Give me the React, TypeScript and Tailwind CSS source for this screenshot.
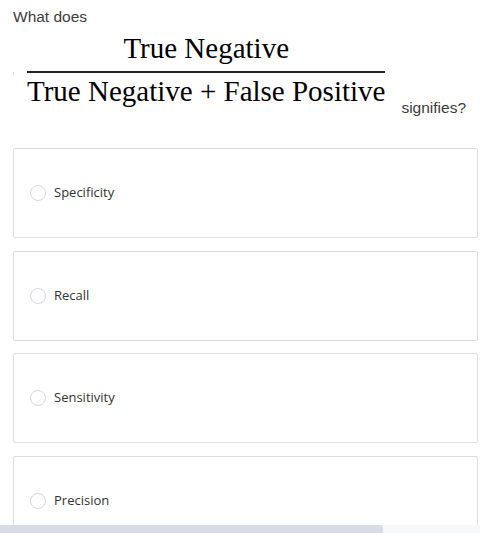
import React from 'react'

const options = ['Specificity', 'Recall', 'Sensitivity', 'Precision']

export default function App() {
  return (
    <div className="relative h-[533px] w-[480px] overflow-hidden bg-white">
      <div className="pl-[13px] pr-[2px] pt-[8px]">
        <div className="text-[15.5px] leading-[18px] text-[#3c3c3c]" style={{ fontFamily: '"Liberation Sans", Arial, sans-serif' }}>
          What does
        </div>

        <div className="flex items-end">
          <span className="mb-[32px] h-[3px] w-px bg-[#dddddd]" />
          <div className="ml-[13px] flex flex-col items-center text-black" style={{ fontFamily: '"Liberation Serif", "Times New Roman", serif' }}>
            <div className="pt-[6px] text-[29px] leading-[32px]">True Negative</div>
            <div className="mt-[7px] h-[2px] w-full bg-[#222]" />
            <div className="mt-[2px] text-[29px] leading-[32px]">True Negative + False Positive</div>
          </div>
          <div className="mb-[-10px] ml-[16px] text-[15.5px] leading-[18px] text-[#3c3c3c]" style={{ fontFamily: '"Liberation Sans", Arial, sans-serif' }}>
            signifies?
          </div>
        </div>

        <div className="mt-[41px] flex flex-col gap-[12.5px]">
          {options.map((o) => (
            <div key={o} className="flex h-[90px] items-center rounded-[2px] border border-[#dcdfe6] pl-[16px]">
              <span className="h-[16px] w-[16px] rounded-full border border-[#d5d8e0] bg-white" />
              <span className="ml-[8px] text-[13px] text-[#333]" style={{ fontFamily: '"Open Sans", "Noto Sans", sans-serif' }}>
                {o}
              </span>
            </div>
          ))}
        </div>
      </div>

      <div className="absolute bottom-0 left-0 flex h-[8px] w-full bg-[#f7f8fa]">
        <div className="h-full w-[383px] rounded-tr-[3px] bg-[#d9dbe6]" />
      </div>
    </div>
  )
}
